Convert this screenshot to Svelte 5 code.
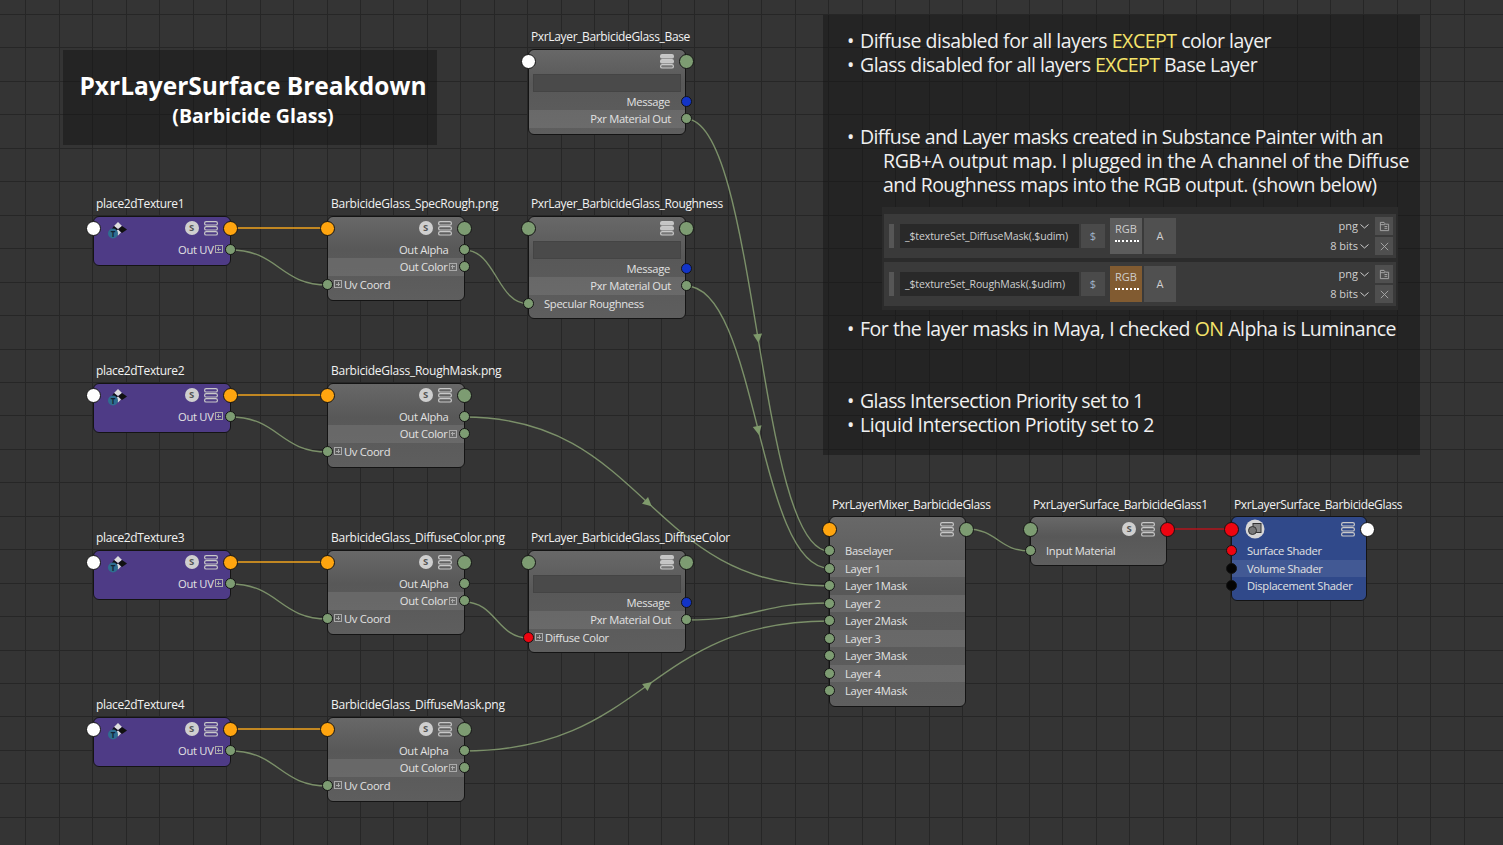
<script>
  const tex = (n, y) => ({ x: 93, y, w: 137.5, h: 50, title: `place2dTexture${n}`, kind: 'purple', left: 'white', right: 'orange', s: true, icon: 'tex',
    rows: [{ label: 'Out UV', side: 'r', exp: true, port: 'green' }] });
  const file = (name, y) => ({ x: 327, y, w: 137.5, h: 85, title: name, kind: 'file', left: 'orange', right: 'green', s: true,
    rows: [
      { label: 'Out Alpha', side: 'r', port: 'green', pad: 9 },
      { label: 'Out Color', side: 'r', exp: true, port: 'green', alt: true },
      { label: 'Uv Coord', side: 'l', exp: true, port: 'green' }
    ] });
  const layer = (name, y, extra) => ({ x: 528, y, w: 158, title: name, left: y === 48.5 ? 'white' : 'green', right: 'green', field: true, h: extra ? 103.5 : 86,
    rows: [
      { label: 'Message', side: 'r', port: 'blue', pad: 9 },
      { label: 'Pxr Material Out', side: 'r', port: 'green', pad: 8, alt: true },
      ...(extra ? [extra] : [])
    ] });
  const nodes = [
    layer('PxrLayer_BarbicideGlass_Base', 48.5),
    tex(1, 215.5), tex(2, 382.5), tex(3, 549.5), tex(4, 716.5),
    file('BarbicideGlass_SpecRough.png', 215.5),
    file('BarbicideGlass_RoughMask.png', 382.5),
    file('BarbicideGlass_DiffuseColor.png', 549.5),
    file('BarbicideGlass_DiffuseMask.png', 716.5),
    layer('PxrLayer_BarbicideGlass_Roughness', 215.5, { label: 'Specular Roughness', side: 'l', port: 'green', pad: 10 }),
    layer('PxrLayer_BarbicideGlass_DiffuseColor', 549.5, { label: 'Diffuse Color', side: 'l', exp: true, port: 'red' }),
    { x: 829, y: 516, w: 137, h: 191, title: 'PxrLayerMixer_BarbicideGlass', kind: 'tall', left: 'orange', right: 'green',
      rows: ['Baselayer', 'Layer 1', 'Layer 1Mask', 'Layer 2', 'Layer 2Mask', 'Layer 3', 'Layer 3Mask', 'Layer 4', 'Layer 4Mask']
        .map((label, i) => ({ label, side: 'l', port: 'green', pad: 10, alt: i % 2 === 1 })) },
    { x: 1030, y: 516, w: 137, h: 50, title: 'PxrLayerSurface_BarbicideGlass1', kind: 'tall', left: 'green', right: 'red', s: true,
      rows: [{ label: 'Input Material', side: 'l', port: 'green', pad: 10 }] },
    { x: 1231, y: 516, w: 136, h: 85, title: 'PxrLayerSurface_BarbicideGlass', kind: 'tall blue', left: 'red', right: 'white', icon: 'sg',
      rows: [
        { label: 'Surface Shader', side: 'l', port: 'red', pad: 10 },
        { label: 'Volume Shader', side: 'l', port: 'black', pad: 10, alt: true },
        { label: 'Displacement Shader', side: 'l', port: 'black', pad: 10 }
      ] }
  ];

  const curve = (a, b, c, d) => {
    const k = (c - a) * 0.5;
    return `M${a} ${b}C${a + k} ${b} ${c - k} ${d} ${c} ${d}`;
  };
  const texY = [216, 383, 550, 717];
  const wires = [
    curve(686, 119, 829, 551),
    curve(686, 286, 829, 568),
    curve(464, 417, 829, 586),
    curve(686, 620, 829, 603),
    curve(464, 751, 829, 621),
    curve(464, 250, 529, 304),
    curve(464, 602, 529, 638),
    curve(966, 529, 1030, 551),
    ...texY.map((y) => curve(230, y + 34, 328, y + 69))
  ];
  const arrows = [[758, 338, 84], [758, 430, 78], [648, 503, 42], [648, 685, -38]];

  const gridX = Array.from({ length: 45 }, (_, i) => Math.round(-8 + i * 33.45) + 0.5);
  const gridY = Array.from({ length: 26 }, (_, i) => Math.round(14 + i * 33.45) + 0.5);
</script>

{#snippet stack(filled)}
  <svg class="stack" class:filled viewBox="0 0 14 15" aria-hidden="true">
    <rect x="0.6" y="0.6" width="12.8" height="3.4" rx="1.6" />
    <rect x="0.6" y="5.6" width="12.8" height="3.4" rx="1.6" />
    <rect x="0.6" y="10.6" width="12.8" height="3.4" rx="1.6" />
  </svg>
{/snippet}

<div class="canvas">
  <svg class="wires" viewBox="0 0 1503 845" aria-hidden="true">
    {#each gridX as g}
      <line class="gl" x1={g} y1="0" x2={g} y2="845" />
    {/each}
    {#each gridY as g}
      <line class="gl" x1="0" y1={g} x2="1503" y2={g} />
    {/each}
    {#each texY as y}
      <line class="owire" x1="230" y1={y + 12} x2="328" y2={y + 12} />
    {/each}
    <line class="rwire" x1="1167" y1="529" x2="1231" y2="529" />
    {#each wires as d}
      <path class="wire" {d} />
    {/each}
    {#each arrows as [x, y, r]}
      <polygon class="arrow" points="-4,-4.500 5,0 -4,4.500" transform="translate({x} {y}) rotate({r})" />
    {/each}
  </svg>

  <div class="title-panel">
    <div class="t1">PxrLayerSurface Breakdown</div>
    <div class="t2">(Barbicide Glass)</div>
  </div>

  {#each nodes as n}
    <div class="node {n.kind ?? ''}" style="left:{n.x}px;top:{n.y}px;width:{n.w}px;height:{n.h}px">
      <div class="label">{n.title}</div>
      <span class="port big {n.left} pl"></span>
      <span class="port big {n.right} pr"></span>
      <div class="head">
        {#if n.icon === 'tex'}
          <svg class="texicon" viewBox="0 0 20 17" aria-hidden="true">
            <path d="M10 0l4 4-4 3-4-3z" fill="#ddd" />
            <path d="M14 4l5 3.500-5 3.500-4-3.500z" fill="#111" />
            <path d="M6 4l4 3.500-4 3.500-3-3z" fill="#111" />
            <path d="M10 7.500l3 3-3 3-3-3z" fill="#ddd" />
            <circle cx="5" cy="11.500" r="5" fill="#2f6d8f" />
            <text x="5" y="14.500" class="tt">T</text>
          </svg>
        {:else if n.icon === 'sg'}
          <svg class="sgicon" viewBox="0 0 20 20" aria-hidden="true">
            <circle cx="10" cy="10" r="9.500" fill="#d6d6d6" />
            <rect x="8" y="4.500" width="8" height="9" fill="#8b8b8b" stroke="#333" />
            <circle cx="7.500" cy="11.500" r="4" fill="#777" stroke="#333" />
          </svg>
        {/if}
        <span class="grow"></span>
        {#if n.s}<span class="sbtn">S</span>{/if}
        {@render stack(n.field)}
      </div>
      {#if n.field}<div class="field"></div>{/if}
      <div class="rows">
        {#each n.rows as r}
          <div class="row {r.side} {r.alt ? 'alt' : ''}" style="--pad:{r.pad ?? 0}px">
            <span class="port small {r.port} {r.side === 'r' ? 'pr' : 'pl'}"></span>
            {#if r.exp && r.side === 'l'}<span class="exp"></span>{/if}
            <span class="rl">{r.label}</span>
            {#if r.exp && r.side === 'r'}<span class="exp"></span>{/if}
          </div>
        {/each}
      </div>
    </div>
  {/each}

  <div class="notes">
    <div class="group">
      <p><b>•</b>Diffuse disabled for all layers <em>EXCEPT</em> color layer</p>
      <p class="tight"><b>•</b>Glass disabled for all layers <em>EXCEPT</em> Base Layer</p>
    </div>
    <div class="group">
      <p class="tighter"><b>•</b>Diffuse and Layer masks created in Substance Painter with an</p>
      <p class="ind loose">RGB+A output map. I plugged in the A channel of the Diffuse</p>
      <p class="ind tight">and Roughness maps into the RGB output. (shown below)</p>
    </div>
    <div class="sp">
      {#each [{ t: '_$textureSet_DiffuseMask(.$udim)', on: false }, { t: '_$textureSet_RoughMask(.$udim)', on: true }] as row}
        <div class="sp-row">
          <span class="grip"></span>
          <span class="inp">{row.t}</span>
          <span class="dollar">$</span>
          <span class="chan rgb" class:on={row.on}>RGB<i></i></span>
          <span class="chan a">A</span>
          <span class="grow"></span>
          <div class="opts">
            <div class="opt"><span>png</span><svg class="chev" viewBox="0 0 9 5"><path d="M.5.500l4 3.500 4-3.500" /></svg><span class="sq"><svg viewBox="0 0 12 12"><path d="M1.500 1.500h4l1.500 2h3.500v7h-9zM1.500 4h5M6 6h3M6 8h3" /></svg></span></div>
            <div class="opt"><span>8 bits</span><svg class="chev" viewBox="0 0 9 5"><path d="M.5.500l4 3.500 4-3.500" /></svg><span class="sq"><svg viewBox="0 0 12 12"><path d="M2 2l8 8M10 2l-8 8" /></svg></span></div>
          </div>
        </div>
      {/each}
    </div>
    <p><b>•</b>For the layer masks in Maya, I checked <em>ON</em> Alpha is Luminance</p>
    <div class="group last">
      <p class="tighter"><b>•</b>Glass Intersection Priority set to 1</p>
      <p><b>•</b>Liquid Intersection Priotity set to 2</p>
    </div>
  </div>
</div>

<style>
  :global(body) { margin: 0; background: #343434; }
  .canvas {
    position: relative; width: 1503px; height: 845px; overflow: hidden;
    background: #343434; font-family: "Open Sans", "Noto Sans", sans-serif; color: #e4e4e4;
  }
  .wires { position: absolute; inset: 0; width: 1503px; height: 845px; }
  .gl { stroke: #262626; stroke-width: 1; }
  .wire { fill: none; stroke: #7b9069; stroke-width: 1.4; }
  .arrow { fill: #7f9a6c; }
  .owire { stroke: #f0a31c; stroke-width: 1.6; }
  .rwire { stroke: #b3141c; stroke-width: 1.6; }

  .title-panel {
    position: absolute; left: 63px; top: 50px; width: 374px; height: 95px; box-sizing: border-box; padding: 19px 0 0 6px;
    background: rgba(20, 20, 20, .5); display: flex; flex-direction: column; align-items: center; color: #fff; font-weight: 700;
  }
  .t1 { font-size: 24.500px; line-height: 33px; }
  .t2 { font-size: 19.500px; line-height: 27px; }

  .node {
    position: absolute; box-sizing: border-box; border: 1.5px solid #141414; border-radius: 6px;
    background: linear-gradient(#686868, #585858 40%, #5e5e5e);
    display: flex; flex-direction: column; font-size: 11.200px;
  }
  .purple { background: #4e3b86; }
  .blue { background: #30498a; }
  .label {
    position: absolute; left: 2px; top: -21px; white-space: nowrap; font-size: 12px; line-height: 16px; color: #f2f2f2; letter-spacing: -.35px;
  }
  .file .label { left: 3px; letter-spacing: -.25px; }
  .tall .label { top: -20px; }
  .head { height: 23px; display: flex; align-items: center; gap: 5px; padding: 0 11px 0 15px; flex: none; }
  .file .head, .purple .head { padding-right: 12px; }
  .tall .head { height: 24px; }
  .tall .port.big { top: 5px; }
  .grow { flex: 1; }
  .stack { width: 14px; height: 15px; flex: none; }
  .stack rect { fill: none; stroke: #c8c8c8; stroke-width: 1.2; }
  .stack.filled rect { fill: #c4c4c4; }
  .stack.filled rect:last-child { fill: #777; }
  .sbtn {
    width: 14px; height: 14px; border-radius: 50%; background: #cfcfcf; color: #555; font-size: 9.500px; font-weight: 700;
    display: flex; align-items: center; justify-content: center; line-height: 1; margin-top: -1px;
  }
  .texicon { width: 20px; height: 17px; margin: 5px 0 0 -1px; }
  .tt { font-size: 8px; font-weight: 700; fill: #123; text-anchor: middle; }
  .sgicon { width: 20px; height: 20px; margin-left: -2px; }
  .field { height: 18px; margin: 1px 4px 0; background: #4a4a4a; flex: none; border: 1px solid #444; box-sizing: border-box; }
  .rows { margin-top: 1px; display: flex; flex-direction: column; }
  .row {
    position: relative; height: 17.500px; display: flex; align-items: center; white-space: nowrap; color: #e2e2e2; letter-spacing: -.3px;
  }
  .row.alt { background: rgba(255, 255, 255, .09); }
  .row.r { justify-content: flex-end; padding-right: calc(6px + var(--pad)); }
  .row.l { padding-left: calc(5px + var(--pad)); }
  .exp {
    width: 8px; height: 8px; box-sizing: border-box; border: 1px solid #aaa; margin: 0 1px; flex: none;
    background: linear-gradient(#aaa, #aaa) center/4px 1px no-repeat, linear-gradient(#aaa, #aaa) center/1px 4px no-repeat;
  }
  .row.l .exp { margin-right: 2px; }
  .port { position: absolute; box-sizing: border-box; border-radius: 50%; border: 1.500px solid #141414; }
  .port.big { width: 15px; height: 15px; top: 4px; }
  .port.big.pl { left: -8.500px; }
  .port.big.pr { right: -8.500px; }
  .port.small { width: 11px; height: 11px; top: 3.300px; }
  .port.small.pl { left: -6.500px; }
  .port.small.pr { right: -6.500px; }
  .green { background: #7d9c72; }
  .white { background: #fff; }
  .port.orange { background: #ffa50f; }
  .red { background: #ee0410; }
  .port.blue { background: #1234c8; }
  .black { background: #050505; }

  .notes {
    position: absolute; left: 823px; top: 15px; width: 597px; height: 440px; box-sizing: border-box; padding: 14px 0 0 24px;
    background: rgba(20, 20, 20, .5); color: #f0f0f0; font-size: 19.500px; line-height: 24px; letter-spacing: -.48px;
  }
  .notes p { margin: 0; white-space: nowrap; }
  .notes p.tight { letter-spacing: -.54px; }
  .notes p.tighter { letter-spacing: -.6px; }
  .notes p.loose { letter-spacing: -.36px; }
  .notes p b { display: inline-block; width: 13px; font-weight: 400; }
  .notes em { font-style: normal; color: #f5e46a; }
  .ind { padding-left: 36px; }
  .group { margin-bottom: 48px; }
  .group:has(+ .sp) { margin-bottom: 10px; }
  .group.last { margin: 48px 0 0; }
  .sp {
    margin: 0 0 7px 35px; width: 516px; height: 103px; box-sizing: border-box; padding: 7px 2px 0 2px; background: #2b2b2b;
    display: flex; flex-direction: column; gap: 4px; letter-spacing: 0; font-size: 11px; line-height: 14px; color: #cfcfcf;
  }
  .sp-row { height: 44px; background: #3a3a3a; display: flex; align-items: center; padding-left: 5px; flex: none; }
  .grip { width: 5px; height: 24px; background: #565656; margin-right: 6px; }
  .inp { width: 179px; height: 24px; background: #292929; line-height: 24px; padding-left: 5px; box-sizing: border-box; white-space: nowrap; font-size: 10.500px; letter-spacing: -.12px; }
  .dollar { width: 24px; height: 24px; background: #4a4a4a; margin: 0 5px 0 2px; text-align: center; line-height: 24px; color: #9fb3c8; }
  .chan { width: 32px; height: 36px; background: #5c5c5c; text-align: center; padding-top: 4px; box-sizing: border-box; margin-right: 2px; position: relative; }
  .chan.a { line-height: 36px; padding: 0; background: #505050; }
  .chan.on { background: #815b31; }
  .chan i { position: absolute; left: 5px; right: 3px; top: 22px; border-top: 2px dotted #fff; }
  .opts { display: flex; flex-direction: column; gap: 2px; align-items: flex-end; padding-right: 3px; }
  .opt { display: flex; align-items: center; gap: 2px; height: 18px; }
  .chev { width: 9px; height: 5px; margin-right: 4px; }
  .chev path { fill: none; stroke: #ccc; stroke-width: 1; }
  .sq { width: 18px; height: 18px; background: #4f4f4f; display: flex; align-items: center; justify-content: center; }
  .sq svg { width: 11px; height: 11px; }
  .sq path { fill: none; stroke: #aaa; stroke-width: 1; }
</style>
